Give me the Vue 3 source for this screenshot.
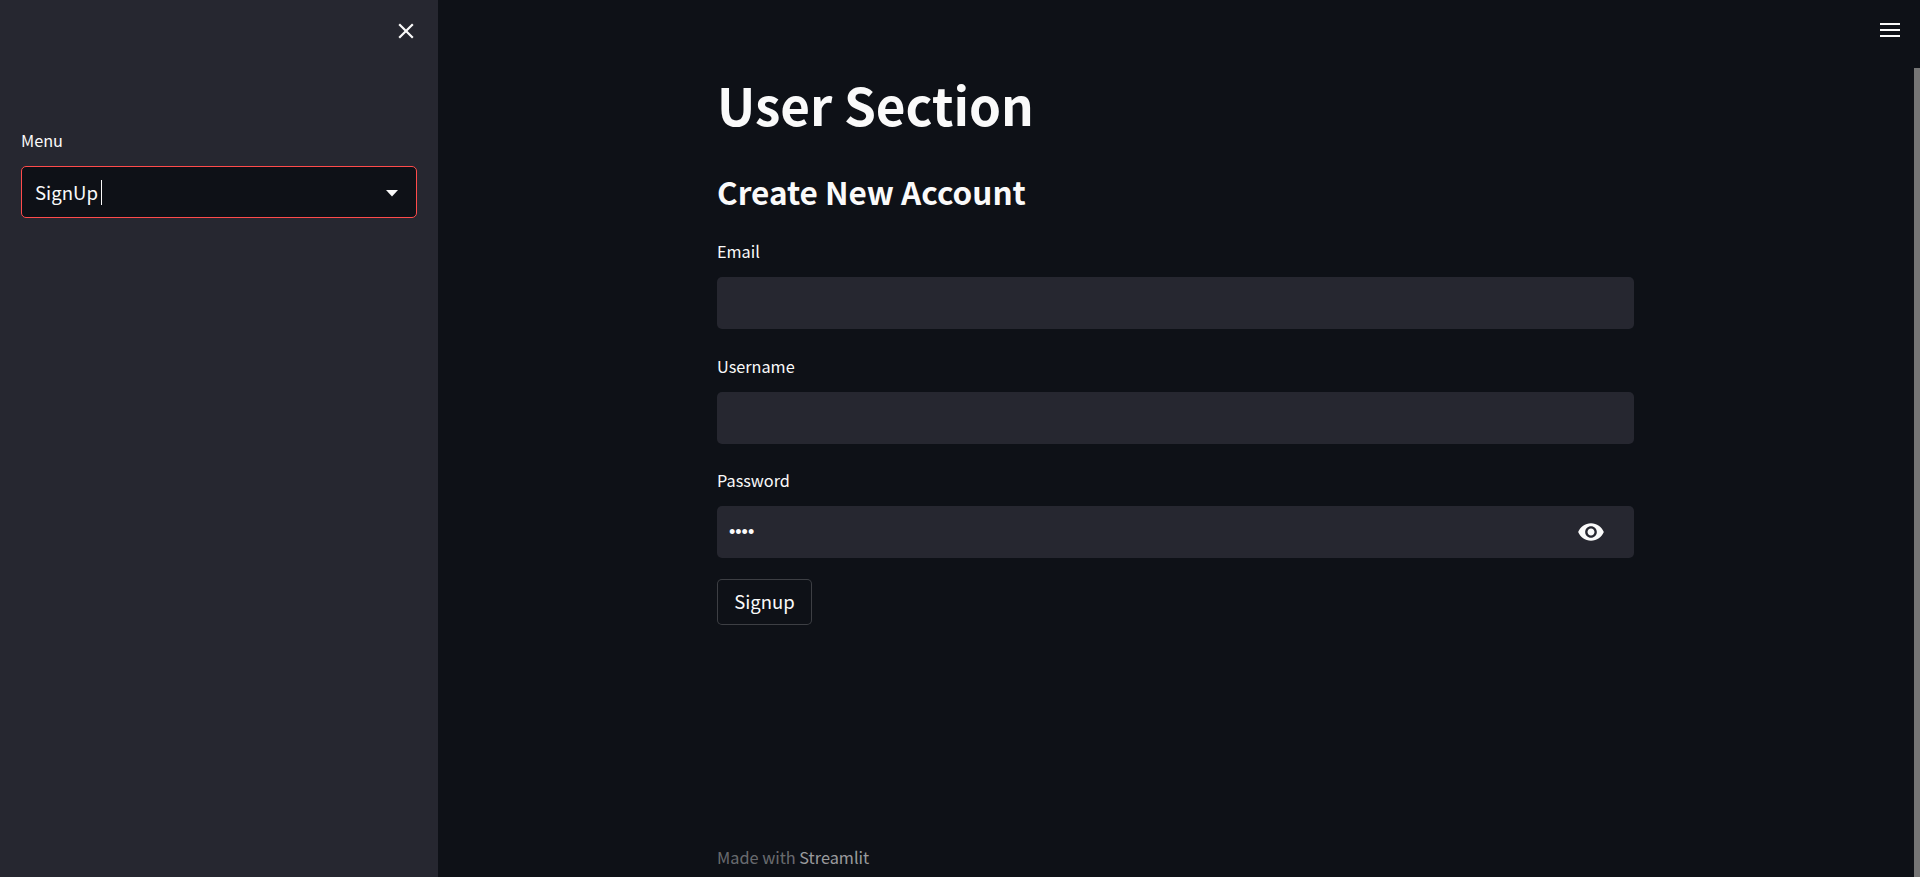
<script setup>
const fields = [
  { label: 'Email', value: '', eye: false },
  { label: 'Username', value: '', eye: false },
  { label: 'Password', value: '••••', eye: true }
]
</script>

<template>
  <div class="app">
    <aside class="sidebar">
      <div class="close-row">
        <svg class="close" viewBox="0 0 16 16" width="16" height="16">
          <path d="M1.2 1.2 L14.8 14.8 M14.8 1.2 L1.2 14.8" stroke="#fafafa" stroke-width="2.2" fill="none" />
        </svg>
      </div>
      <div class="label side-label">Menu</div>
      <div class="select">
        <span class="select-text">SignUp</span><span class="caret"></span>
        <svg class="arrow" viewBox="0 0 12 7" width="12" height="7">
          <path d="M0 0 H12 L6 6.5 Z" fill="#fafafa" />
        </svg>
      </div>
    </aside>
    <main class="main">
      <svg class="menu" viewBox="0 0 20 14" width="20" height="14">
        <path d="M0 1 H20 M0 7 H20 M0 13 H20" stroke="#fafafa" stroke-width="2" fill="none" />
      </svg>
      <div class="thumb"></div>
      <div class="block">
        <h1>User Section</h1>
        <h2>Create New Account</h2>
        <div v-for="f in fields" :key="f.label" class="field">
          <div class="label">{{ f.label }}</div>
          <div class="input">
            <span class="dots">{{ f.value }}</span>
            <svg v-if="f.eye" class="eye" viewBox="0 0 24 24" width="28" height="28">
              <path fill="#fafafa" d="M12 4.5C7 4.5 2.73 7.61 1 12c1.73 4.39 6 7.5 11 7.5s9.27-3.11 11-7.5c-1.73-4.39-6-7.5-11-7.5zM12 17c-2.76 0-5-2.24-5-5s2.24-5 5-5 5 2.24 5 5-2.24 5-5 5zm0-8c-1.66 0-3 1.34-3 3s1.34 3 3 3 3-1.34 3-3-1.34-3-3-3z" />
            </svg>
          </div>
        </div>
        <button class="btn">Signup</button>
        <div class="spacer"></div>
        <footer class="footer">Made with <span class="brand">Streamlit</span></footer>
      </div>
    </main>
  </div>
</template>

<style>
html, body { margin: 0; background: #0e1117; overflow: hidden; }
</style>

<style scoped>
.app {
  display: flex;
  width: 1920px;
  height: 877px;
  overflow: hidden;
  background: #0e1117;
  color: #fafafa;
  font-family: "Noto Sans CJK SC", "Noto Sans", sans-serif;
}
.sidebar {
  width: 438px;
  flex: none;
  box-sizing: border-box;
  background: #262730;
  padding: 0 21px;
}
.close-row {
  display: flex;
  justify-content: flex-end;
  box-sizing: border-box;
  height: 128px;
  padding: 23px 3px 0 0;
}
.label {
  font-size: 16.25px;
  line-height: 24px;
  height: 24px;
  color: #fafafa;
}
.side-label { margin-bottom: 14px; }
.close { display: block; }
.select {
  position: relative;
  display: flex;
  align-items: center;
  box-sizing: border-box;
  height: 52px;
  padding-left: 13px;
  background: #0e1117;
  border: 1px solid #ff4b4b;
  border-radius: 5px;
  font-size: 18.6px;
}
.select-text { margin-bottom: 2px; }
.caret {
  display: inline-block;
  width: 1px;
  height: 25px;
  margin-left: 3px;
  background: #fafafa;
}
.arrow { position: absolute; right: 18px; top: 23px; }
.main {
  position: relative;
  flex: 1;
  min-width: 0;
}
.menu { position: absolute; left: 1442px; top: 23px; }
.thumb {
  position: absolute;
  left: 1476px;
  top: 68px;
  bottom: 0;
  width: 6px;
  background: #757575;
}
.block {
  display: flex;
  flex-direction: column;
  align-items: flex-start;
  box-sizing: border-box;
  height: 877px;
  width: 917px;
  margin-left: 279px;
}
h1 {
  margin: 0;
  padding-top: 68px;
  font-size: 51.2px;
  line-height: 72px;
  font-weight: 700;
}
h2 {
  margin: 0;
  padding-top: 28px;
  font-size: 31.5px;
  line-height: 46px;
  font-weight: 700;
}
.field { width: 100%; margin-top: 24.5px; }
.field:first-of-type { margin-top: 25px; }
.field .label { margin-bottom: 14px; }
.input {
  position: relative;
  display: flex;
  align-items: center;
  height: 52px;
  padding-left: 12px;
  background: #262730;
  border-radius: 5px;
}
.dots { font-family: "Liberation Sans", sans-serif; font-size: 18px; }
.eye { position: absolute; right: 29px; top: 12px; }
.btn {
  margin-top: 21px;
  box-sizing: border-box;
  width: 95px;
  height: 46px;
  padding: 0 0 3px;
  background: #0e1117;
  color: #fafafa;
  border: 1px solid rgba(250, 250, 250, 0.2);
  border-radius: 5px;
  font: inherit;
  font-size: 18.5px;
}
.spacer { flex: 1; }
.footer {
  padding-bottom: 8px;
  font-size: 16.3px;
  line-height: 24px;
  color: rgba(250, 250, 250, 0.4);
}
.brand { color: rgba(250, 250, 250, 0.6); }
</style>
